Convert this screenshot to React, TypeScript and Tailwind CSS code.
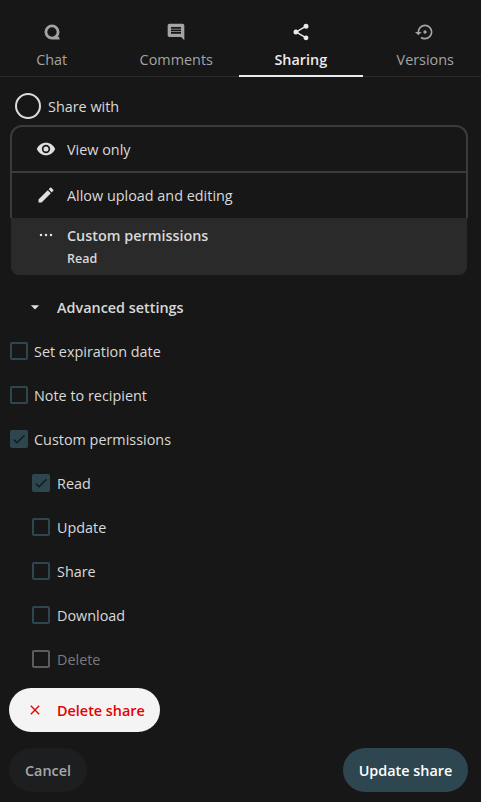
const P = {
  eye: 'M12,9A3,3 0 0,0 9,12A3,3 0 0,0 12,15A3,3 0 0,0 15,12A3,3 0 0,0 12,9M12,17A5,5 0 0,1 7,12A5,5 0 0,1 12,7A5,5 0 0,1 17,12A5,5 0 0,1 12,17M12,4.5C7,4.5 2.73,7.61 1,12C2.73,16.39 7,19.5 12,19.5C17,19.5 21.27,16.39 23,12C21.27,7.61 17,4.5 12,4.5Z',
  pencil: 'M20.71,7.04C21.1,6.65 21.1,6 20.71,5.63L18.37,3.29C18,2.9 17.35,2.9 16.96,3.29L15.12,5.12L18.87,8.87M3,17.25V21H6.75L17.81,9.93L14.06,6.18L3,17.25Z',
  share: 'M18,16.08C17.24,16.08 16.56,16.38 16.04,16.85L8.91,12.7C8.96,12.47 9,12.24 9,12C9,11.76 8.96,11.53 8.91,11.3L15.96,7.19C16.5,7.69 17.21,8 18,8A3,3 0 0,0 21,5A3,3 0 0,0 18,2A3,3 0 0,0 15,5C15,5.24 15.04,5.47 15.09,5.7L8.04,9.81C7.5,9.31 6.79,9 6,9A3,3 0 0,0 3,12A3,3 0 0,0 6,15C6.79,15 7.5,14.69 8.04,14.19L15.16,18.34C15.11,18.55 15.08,18.77 15.08,19C15.08,20.61 16.39,21.91 18,21.91C19.61,21.91 20.92,20.61 20.92,19A2.92,2.92 0 0,0 18,16.08Z',
  restore: 'M12,3A9,9 0 0,0 3,12H0L4,16L8,12H5A7,7 0 0,1 12,5A7,7 0 0,1 19,12A7,7 0 0,1 12,19C10.5,19 9.09,18.5 7.94,17.7L6.5,19.14C8.04,20.3 9.94,21 12,21A9,9 0 0,0 21,12A9,9 0 0,0 12,3M14,12A2,2 0 0,0 12,10A2,2 0 0,0 10,12A2,2 0 0,0 12,14A2,2 0 0,0 14,12Z',
  comment: 'M18,8H6V6H18V8M18,11H6V9H18V11M18,14H6V12H18V14M22,4A2,2 0 0,0 20,2H4A2,2 0 0,0 2,4V16A2,2 0 0,0 4,18H18L22,22V4Z',
  chat: 'M12,3A9,9 0 0,0 3,12A9,9 0 0,0 12,21H21V19.2L19.3,17.3A9,9 0 0,0 21,12A9,9 0 0,0 12,3M12,6.4A5.6,5.6 0 0,1 17.6,12A5.6,5.6 0 0,1 12,17.6A5.6,5.6 0 0,1 6.4,12A5.6,5.6 0 0,1 12,6.4Z',
  dots: 'M16.5,12A1.5,1.5 0 0,1 18,10.5A1.5,1.5 0 0,1 19.5,12A1.5,1.5 0 0,1 18,13.5A1.5,1.5 0 0,1 16.5,12M10.5,12A1.5,1.5 0 0,1 12,10.5A1.5,1.5 0 0,1 13.5,12A1.5,1.5 0 0,1 12,13.5A1.5,1.5 0 0,1 10.5,12M4.5,12A1.5,1.5 0 0,1 6,10.5A1.5,1.5 0 0,1 7.5,12A1.5,1.5 0 0,1 6,13.5A1.5,1.5 0 0,1 4.5,12Z',
  menuDown: 'M7,10L12,15L17,10H7Z',
  close: 'M19,6.41L17.59,5L12,10.59L6.41,5L5,6.41L10.59,12L5,17.59L6.41,19L12,13.41L17.59,19L19,17.59L13.41,12L19,6.41Z',
  check: 'M21,7L9,19L3.5,13.5L4.91,12.09L9,16.17L19.59,5.59L21,7Z',
};

const Icon = ({ d, size = 20, className = '' }: { d: string; size?: number; className?: string }) => (
  <svg viewBox="0 0 24 24" width={size} height={size} fill="currentColor" className={className}>
    <path d={d} />
  </svg>
);

const Tab = ({ icon, label, active }: { icon: string; label: string; active?: boolean }) => (
  <div className={`flex h-[55px] flex-col items-center border-b-2 ${active ? 'border-[#ebebeb] font-semibold text-[#ebebeb]' : 'border-transparent text-[#a3a3a3]'}`}>
    <Icon d={icon} size={20} className={active ? 'text-[#ebebeb]' : 'text-[#a3a3a3]'} />
    <span className="mt-[8px] leading-[20px]">{label}</span>
  </div>
);

const Check = ({
  label,
  checked,
  nested,
  disabled,
}: {
  label: string;
  checked?: boolean;
  nested?: boolean;
  disabled?: boolean;
}) => (
  <div className={`flex h-[44px] items-center gap-[6px] ${nested ? 'pl-[32px]' : 'pl-[10px]'} ${disabled ? 'text-[#7a7a7a]' : 'text-[#d9d9d9]'}`}>
    <span
      className={`flex h-[18px] w-[18px] items-center justify-center rounded-[2px] border-2 ${
        checked ? 'border-[#2d4650] bg-[#2d4650] text-[#171717]' : disabled ? 'border-[#5c5c5c]' : 'border-[#2d4650]'
      }`}
    >
      {checked && <Icon d={P.check} size={16} className="shrink-0" />}
    </span>
    <span className={`mt-[2px] ${nested ? 'ml-px' : ''}`}>{label}</span>
  </div>
);

export default function App() {
  return (
    <div
      className="h-[802px] w-[481px] overflow-hidden bg-[#171717] text-[14.4px] text-[#d9d9d9]"
      style={{ fontFamily: '"Open Sans", "Noto Sans", sans-serif' }}
    >
      <div className="h-[77px] border-b border-[#2b2b2b] pt-[22px]">
        <div className="-ml-[10.5px] grid w-[498px] grid-cols-4">
          <Tab icon={P.chat} label="Chat" />
          <Tab icon={P.comment} label="Comments" />
          <Tab icon={P.share} label="Sharing" active />
          <Tab icon={P.restore} label="Versions" />
        </div>
      </div>

      <div className="flex h-[48px] items-center gap-[7px] pl-[15px] pt-[10px]">
        <span className="h-[26px] w-[26px] rounded-full border-2 border-[#dcdcdc]" />
        <span className="mt-[2px]">Share with</span>
      </div>

      <div className="mx-[10px] w-[458px]">
        <div className="rounded-t-[12px] border-2 border-b-0 border-[#3b3b3b]">
          <div className="flex h-[44px] items-center">
            <Icon d={P.eye} size={20} className="ml-[24px] text-[#e0e0e0]" />
            <span className="ml-[11px] mt-[2px]">View only</span>
          </div>
          <div className="flex h-[47px] items-center border-t-2 border-[#3b3b3b] pb-px">
            <Icon d={P.pencil} size={20} className="ml-[24px] text-[#e0e0e0]" />
            <span className="ml-[11px] mt-[2px]">Allow upload and editing</span>
          </div>
        </div>
        <div className="mx-px h-[57px] rounded-b-[8px] bg-[#2a2a2a] pt-[7px]">
          <div className="flex h-[20px] items-center">
            <Icon d={P.dots} size={20} className="ml-[25px] text-[#e0e0e0]" />
            <span className="ml-[11px] mt-[2px] font-semibold leading-[20px]">Custom permissions</span>
          </div>
          <div className="ml-[56px] mt-[5px] text-[12.5px] font-semibold leading-[18px]">Read</div>
        </div>
      </div>

      <div className="mt-[10px] flex h-[44px] items-center font-semibold">
        <Icon d={P.menuDown} size={20} className="ml-[25px] text-[#e0e0e0]" />
        <span className="ml-[12px] mt-[2px]">Advanced settings</span>
      </div>

      <Check label="Set expiration date" />
      <Check label="Note to recipient" />
      <Check label="Custom permissions" checked />
      <Check label="Read" checked nested />
      <Check label="Update" nested />
      <Check label="Share" nested />
      <Check label="Download" nested />
      <Check label="Delete" nested disabled />

      <button className="ml-[9px] mt-[7px] flex h-[44px] w-[151px] items-center rounded-full bg-[#f4f4f4] font-semibold text-[#e60000]">
        <Icon d={P.close} size={16} className="ml-[18px]" />
        <span className="ml-[14px] mt-[2px]">Delete share</span>
      </button>

      <div className="mt-[16px] flex justify-between pl-[9px] pr-[13px]">
        <button className="h-[44px] w-[78px] rounded-full bg-[#1c1e20] pt-[2px] font-semibold text-[#a5a9ac]">Cancel</button>
        <button className="h-[44px] w-[125px] rounded-full bg-[#2d4650] pt-[2px] font-semibold text-white">Update share</button>
      </div>
    </div>
  );
}
